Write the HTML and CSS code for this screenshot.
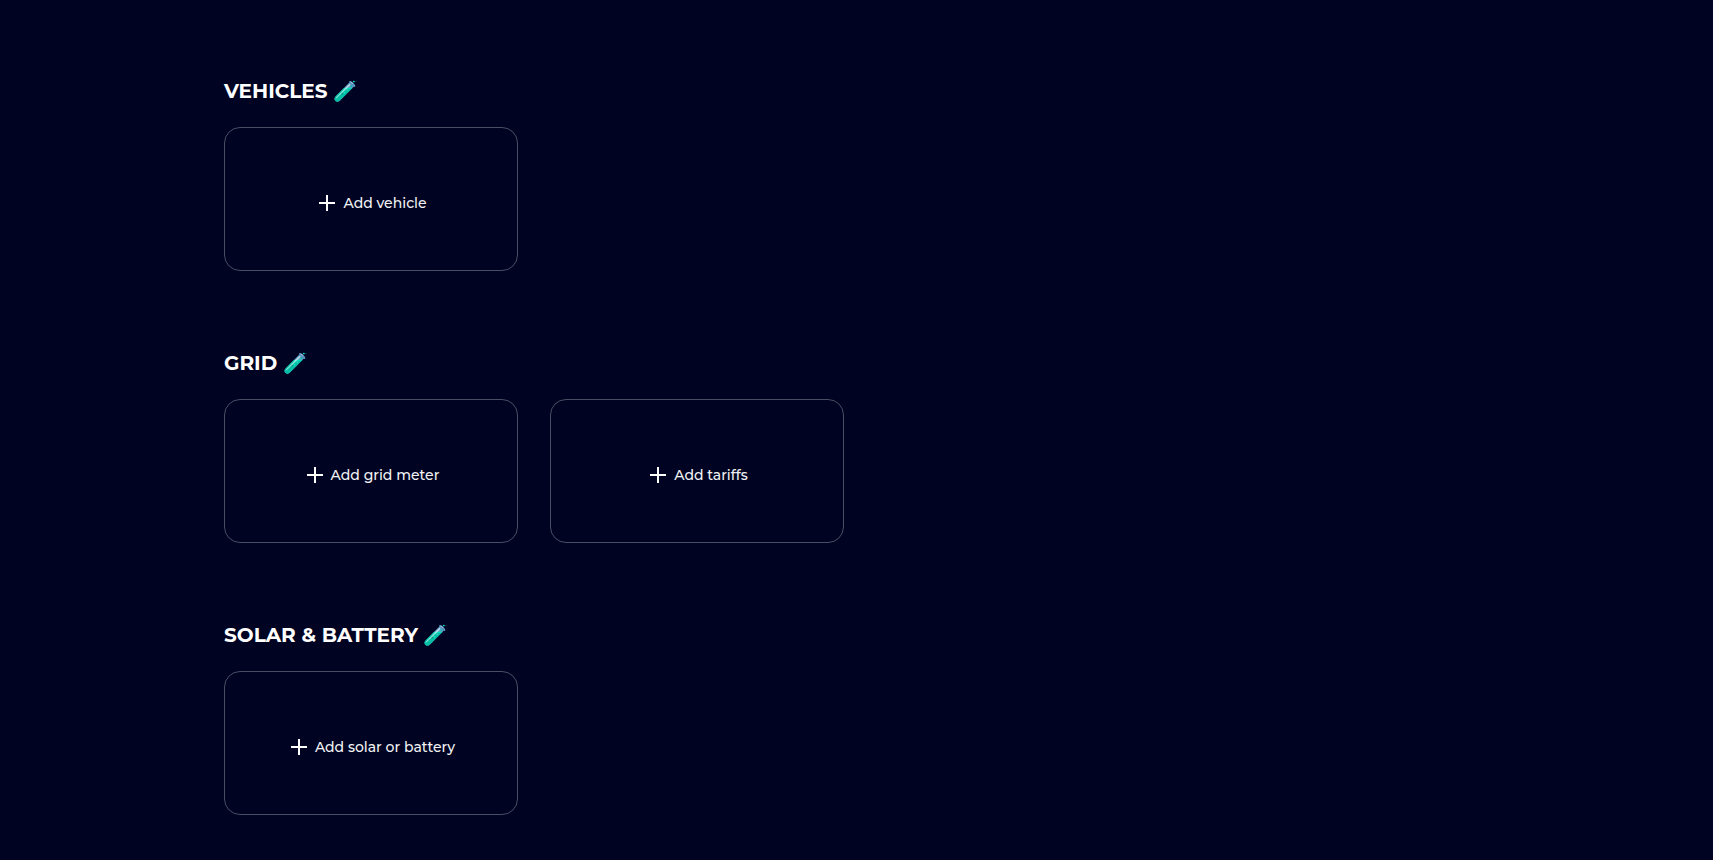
FILE: index.html
```html
<!DOCTYPE html>
<html lang="en">
<head>
<meta charset="utf-8">
<meta name="viewport" content="width=device-width, initial-scale=1">
<title>Configuration</title>
<link rel="stylesheet" href="styles.css">
</head>
<body>
<svg class="sprite" aria-hidden="true">
  <defs>
    <symbol id="plus" viewBox="0 0 16 16">
      <path d="M8 0V16M0 8H16" stroke="currentColor" stroke-width="2"/>
    </symbol>
  </defs>
</svg>
<main class="container">
  <section class="section">
    <h2 class="title">VEHICLES <span class="emoji">🧪</span></h2>
    <div class="cards">
      <button class="card" type="button"><svg class="plus"><use href="#plus"/></svg>Add vehicle</button>
    </div>
  </section>
  <section class="section">
    <h2 class="title">GRID <span class="emoji">🧪</span></h2>
    <div class="cards">
      <button class="card" type="button"><svg class="plus"><use href="#plus"/></svg>Add grid meter</button>
      <button class="card" type="button"><svg class="plus"><use href="#plus"/></svg>Add tariffs</button>
    </div>
  </section>
  <section class="section">
    <h2 class="title">SOLAR &amp; BATTERY <span class="emoji">🧪</span></h2>
    <div class="cards">
      <button class="card" type="button"><svg class="plus"><use href="#plus"/></svg>Add solar or battery</button>
    </div>
  </section>
</main>
</body>
</html>
```
FILE: styles.css
```css
* { box-sizing: border-box; }
body {
  margin: 0;
  padding: 0 0 0 7px;
  background: #000322;
  color: #fff;
  font-family: Montserrat, Inter, sans-serif;
}
.sprite { position: absolute; width: 0; height: 0; }
.container {
  max-width: 1272px;
  margin: 0 auto;
  padding: 79px 0 46px;
}
.section + .section { margin-top: 80px; }
.title {
  margin: 0 0 24px;
  font-size: 20px;
  line-height: 24px;
  font-weight: 700;
}
.emoji { font-family: Montserrat, "Noto Color Emoji", sans-serif; }
.cards {
  display: grid;
  grid-template-columns: repeat(auto-fill, minmax(260px, 1fr));
  gap: 32px;
}
.card {
  display: flex;
  align-items: center;
  justify-content: center;
  gap: 8px;
  min-height: 144px;
  padding: 8px 8px 0 12px;
  border: 1px solid #4c4d62;
  border-radius: 16px;
  background: transparent;
  color: #f2f2f4;
  font-family: inherit;
  font-size: 14px;
  line-height: 20px;
  font-weight: 500;
  cursor: pointer;
}
.plus { width: 16px; height: 16px; color: #fff; }
```
